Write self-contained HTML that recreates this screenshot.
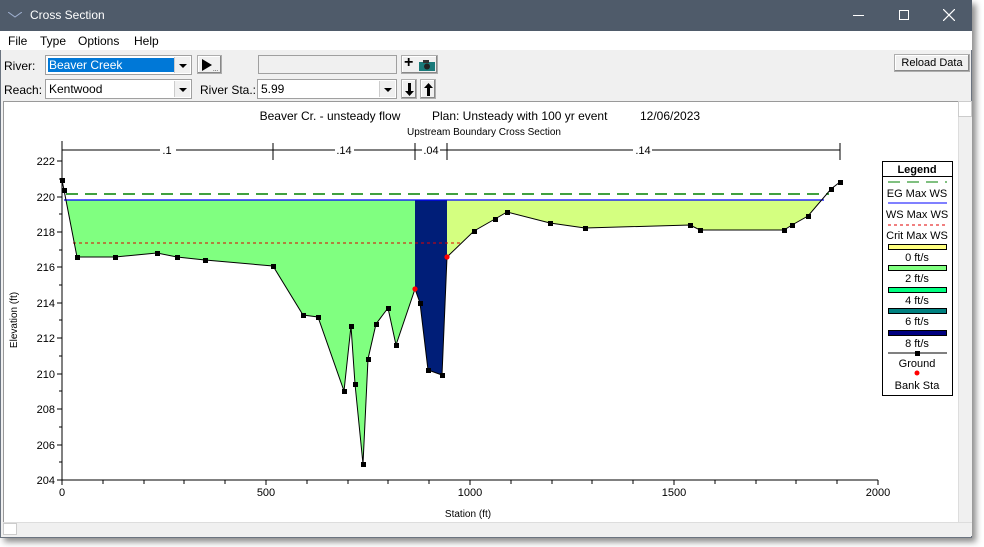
<!DOCTYPE html>
<html><head><meta charset="utf-8"><style>
*{margin:0;padding:0;box-sizing:border-box}
body{width:984px;height:547px;background:#fff;font-family:"Liberation Sans",Arial,sans-serif;font-size:12px;position:relative;overflow:hidden}
.a{position:absolute}
.win{left:0;top:0;width:972px;height:538px;background:#f0f0f0;border:1px solid #6b7480;box-shadow:4px 4px 6px rgba(0,0,0,.45)}
.tb{left:0;top:0;width:972px;height:31px;background:#4f5b6a;color:#fff;font-size:12px}
.menu{left:0;top:31px;width:972px;height:19px;background:#fff}
.menu span{position:absolute;top:3px;font-size:12px}
.combo{background:#fff;border:1px solid #a0a0a0;height:20px}
.dd{position:absolute;right:1px;top:1px;width:16px;height:16px;background:#f0f0f0;border-left:1px solid #ccc}
.dd:after{content:"";position:absolute;left:4px;top:7px;border-left:4px solid transparent;border-right:4px solid transparent;border-top:4px solid #000}
.btn{background:#f0f0f0;border:1px solid #adadad;box-shadow:inset -1px -1px #888,inset 1px 1px #fff}
</style></head><body>
<div class="a win"></div>
<div class="a tb">
<svg class="a" style="left:8px;top:12px" width="14" height="6"><path d="M0 0 L7 5 L14 0" stroke="#9fb0d0" fill="none"/></svg>
<span class="a" style="left:30px;top:8px">Cross Section</span>
<div class="a" style="left:853px;top:15px;width:11px;height:1px;background:#fff"></div>
<div class="a" style="left:899px;top:10px;width:10px;height:10px;border:1px solid #fff"></div>
<svg class="a" style="left:943px;top:9px" width="12" height="12"><path d="M0 0L12 12M12 0L0 12" stroke="#fff" stroke-width="1.2"/></svg>
</div>
<div class="a menu"><span style="left:8px">File</span><span style="left:40px">Type</span><span style="left:78px">Options</span><span style="left:134px">Help</span></div>
<span class="a" style="left:4px;top:59px">River:</span>
<div class="a combo" style="left:45px;top:55px;width:147px"><div class="a" style="left:2px;top:2px;width:126px;height:14px;background:#0078d7;color:#fff;font-size:12px;line-height:14px;padding-left:1px">Beaver Creek</div><div class="dd"></div></div>
<div class="a btn" style="left:197px;top:55px;width:25px;height:19px"><svg class="a" style="left:3px;top:3px" width="18" height="13"><path d="M1 0L11 6L1 12Z"/><text x="12" y="12" font-size="6">...</text></svg></div>
<div class="a" style="left:258px;top:55px;width:139px;height:19px;border:1px solid #a0a0a0;background:#f0f0f0"></div>
<div class="a btn" style="left:401px;top:55px;width:37px;height:19px"><span class="a" style="left:2px;top:-2px;font-size:16px;font-weight:bold">+</span><svg class="a" style="left:17px;top:4px" width="16" height="11"><rect x="0" y="2" width="16" height="9" fill="#1a7a7a"/><rect x="4" y="0" width="6" height="3" fill="#333"/><circle cx="8" cy="6.5" r="3" fill="#222"/></svg></div>
<div class="a btn" style="left:894px;top:54px;width:76px;height:18px;text-align:center;line-height:16px;font-size:11px">Reload Data</div>
<span class="a" style="left:4px;top:83px">Reach:</span>
<div class="a combo" style="left:45px;top:79px;width:147px"><span class="a" style="left:3px;top:2px">Kentwood</span><div class="dd"></div></div>
<span class="a" style="left:200px;top:83px">River Sta.:</span>
<div class="a combo" style="left:257px;top:79px;width:140px"><span class="a" style="left:3px;top:2px">5.99</span><div class="dd"></div></div>
<div class="a btn" style="left:401px;top:79px;width:16px;height:20px"><svg class="a" style="left:3px;top:3px" width="9" height="13"><path d="M3 0h3v8h3L4.5 13L0 8h3Z"/></svg></div>
<div class="a btn" style="left:420px;top:79px;width:16px;height:20px"><svg class="a" style="left:3px;top:3px" width="9" height="13"><path d="M3 13h3V5h3L4.5 0L0 5h3Z"/></svg></div>
<div class="a" style="left:3px;top:101px;width:956px;height:422px;background:#fff;border-top:1px solid #999;border-left:1px solid #999"></div>
<div class="a" style="left:958px;top:101px;width:14px;height:422px;background:#f0f0f0;border-left:1px solid #ddd"></div>
<div class="a" style="left:3px;top:522px;width:969px;height:14px;background:#f0f0f0;border-top:1px solid #ddd"></div>
<div class="a" style="left:3px;top:523px;width:14px;height:12px;background:#fff;border:1px solid #ccc"></div>
<div class="a" style="left:958px;top:101px;width:14px;height:16px;background:#fff;border:1px solid #ccc"></div>
<svg class="a" style="left:0;top:0" width="984" height="547" font-family="Liberation Sans,Arial,sans-serif">
<defs><clipPath id="w"><polygon points="66,200 77,257 115,257 157,253 177,257 205,260 273,266 303,315 318,317 344,391 351,326 355,384 363,464 368,359 376,324 388,308 396,345 415,289 420,303 428,370 442,375 447,257 474,231 495,219 507,212 550,223 585,228 690,225 700,230 784,230 792,225 808,216 822,200"/></clipPath></defs>
<g clip-path="url(#w)"><rect x="60" y="200" width="355" height="280" fill="#80ff80"/><rect x="415" y="200" width="32" height="280" fill="#001e78"/><rect x="447" y="200" width="380" height="280" fill="#d4ff80"/></g>
<line x1="66" y1="194" x2="829" y2="194" stroke="#008000" stroke-width="1.5" stroke-dasharray="12,7"/>
<line x1="64" y1="200" x2="824" y2="200" stroke="#0000ff" stroke-width="1.3"/>
<line x1="73" y1="243" x2="462" y2="243" stroke="#e00000" stroke-dasharray="3,3"/>
<polyline fill="none" stroke="#000" points="62,180 64,190 77,257 115,257 157,253 177,257 205,260 273,266 303,315 318,317 344,391 351,326 355,384 363,464 368,359 376,324 388,308 396,345 415,289 420,303 428,370 442,375 447,257 474,231 495,219 507,212 550,223 585,228 690,225 700,230 784,230 792,225 808,216 831,189 840,182"/>
<g fill="#000"><rect x="60" y="178" width="5" height="5"/><rect x="62" y="188" width="5" height="5"/><rect x="75" y="255" width="5" height="5"/><rect x="113" y="255" width="5" height="5"/><rect x="155" y="251" width="5" height="5"/><rect x="175" y="255" width="5" height="5"/><rect x="203" y="258" width="5" height="5"/><rect x="271" y="264" width="5" height="5"/><rect x="301" y="313" width="5" height="5"/><rect x="316" y="315" width="5" height="5"/><rect x="342" y="389" width="5" height="5"/><rect x="349" y="324" width="5" height="5"/><rect x="353" y="382" width="5" height="5"/><rect x="361" y="462" width="5" height="5"/><rect x="366" y="357" width="5" height="5"/><rect x="374" y="322" width="5" height="5"/><rect x="386" y="306" width="5" height="5"/><rect x="394" y="343" width="5" height="5"/><rect x="418" y="301" width="5" height="5"/><rect x="426" y="368" width="5" height="5"/><rect x="440" y="373" width="5" height="5"/><rect x="472" y="229" width="5" height="5"/><rect x="493" y="217" width="5" height="5"/><rect x="505" y="210" width="5" height="5"/><rect x="548" y="221" width="5" height="5"/><rect x="583" y="226" width="5" height="5"/><rect x="688" y="223" width="5" height="5"/><rect x="698" y="228" width="5" height="5"/><rect x="782" y="228" width="5" height="5"/><rect x="790" y="223" width="5" height="5"/><rect x="806" y="214" width="5" height="5"/><rect x="829" y="187" width="5" height="5"/><rect x="838" y="180" width="5" height="5"/></g>
<g fill="#f00"><circle cx="415" cy="289" r="2.6"/><circle cx="447" cy="257" r="2.6"/></g>
<g stroke="#000"><line x1="62" y1="141" x2="62" y2="480"/><line x1="62" y1="480" x2="878" y2="480"/>
<path d="M62 480v5M103 480v4M144 480v4M184 480v4M225 480v4M266 480v5M307 480v4M348 480v4M388 480v4M429 480v4M470 480v5M511 480v4M552 480v4M592 480v4M633 480v4M674 480v5M715 480v4M756 480v4M796 480v4M837 480v4M878 480v5"/>
<path d="M57 480h5M57 445h5M57 409h5M57 374h5M57 338h5M57 303h5M57 267h5M57 232h5M57 197h5M57 161h5M59 462h3M59 427h3M59 391h3M59 356h3M59 320h3M59 285h3M59 250h3M59 214h3M59 179h3"/>
<path d="M62 150h98M176 150h97M273 150h62M354 150h61M415 150h7M440 150h7M447 150h186M652 150h188M273 143v17M415 143v17M447 143v17M840 143v17"/></g>
<g font-size="11" fill="#000"><text x="330" y="120" font-size="12" text-anchor="middle">Beaver Cr. - unsteady flow</text><text x="432" y="120" font-size="12">Plan: Unsteady with 100 yr event</text><text x="640" y="120" font-size="12">12/06/2023</text>
<text x="484" y="135" font-size="10" text-anchor="middle">Upstream Boundary Cross Section</text>
<text x="167" y="154" text-anchor="middle">.1</text><text x="344" y="154" text-anchor="middle">.14</text><text x="431" y="154" text-anchor="middle">.04</text><text x="643" y="154" text-anchor="middle">.14</text>
<g text-anchor="end"><text x="55" y="484">204</text><text x="55" y="449">206</text><text x="55" y="413">208</text><text x="55" y="378">210</text><text x="55" y="342">212</text><text x="55" y="307">214</text><text x="55" y="271">216</text><text x="55" y="236">218</text><text x="55" y="201">220</text><text x="55" y="165">222</text></g>
<g text-anchor="middle"><text x="62" y="496">0</text><text x="266" y="496">500</text><text x="470" y="496">1000</text><text x="674" y="496">1500</text><text x="878" y="496">2000</text></g>
<text x="468" y="517" font-size="10" text-anchor="middle">Station (ft)</text>
<text transform="translate(17,320) rotate(-90)" font-size="10" text-anchor="middle">Elevation (ft)</text></g>
<g><rect x="882.5" y="161.5" width="70" height="234" fill="#fff" stroke="#000"/><line x1="883" y1="176.5" x2="952" y2="176.5" stroke="#000"/>
<text x="917" y="173" font-size="11" font-weight="bold" text-anchor="middle">Legend</text>
<line x1="888" y1="182" x2="947" y2="182" stroke="#008000" stroke-dasharray="12,7"/>
<line x1="888" y1="203" x2="947" y2="203" stroke="#0000ff"/>
<line x1="888" y1="225" x2="947" y2="225" stroke="#e00000" stroke-dasharray="3,3"/>
<g stroke="#000"><rect x="888.5" y="244.5" width="58" height="5" fill="#ffff80"/><rect x="888.5" y="265.5" width="58" height="5" fill="#80ff80"/><rect x="888.5" y="287.5" width="58" height="5" fill="#00ff80"/><rect x="888.5" y="308.5" width="58" height="5" fill="#008080"/><rect x="888.5" y="330.5" width="58" height="5" fill="#000080"/><line x1="888" y1="353" x2="947" y2="353"/></g>
<rect x="915" y="351" width="5" height="5"/><circle cx="917" cy="373" r="2.5" fill="#f00"/>
<g font-size="11" text-anchor="middle"><text x="917" y="197">EG Max WS</text><text x="917" y="218">WS Max WS</text><text x="917" y="239">Crit Max WS</text><text x="917" y="261">0 ft/s</text><text x="917" y="282">2 ft/s</text><text x="917" y="304">4 ft/s</text><text x="917" y="325">6 ft/s</text><text x="917" y="347">8 ft/s</text><text x="917" y="367">Ground</text><text x="917" y="389">Bank Sta</text></g></g>
</svg>
</body></html>
